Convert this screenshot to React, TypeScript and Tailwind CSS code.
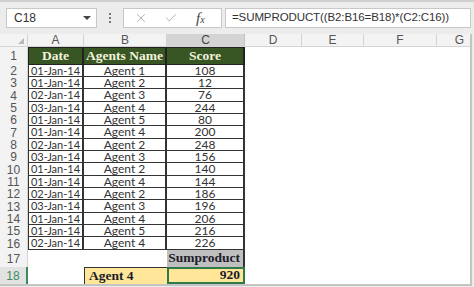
import { X, Check } from "lucide-react";

const ROWS: [string, string, number][] = [
  ["01-Jan-14", "Agent 1", 108],
  ["01-Jan-14", "Agent 2", 12],
  ["02-Jan-14", "Agent 3", 76],
  ["03-Jan-14", "Agent 4", 244],
  ["01-Jan-14", "Agent 5", 80],
  ["01-Jan-14", "Agent 4", 200],
  ["02-Jan-14", "Agent 2", 248],
  ["03-Jan-14", "Agent 3", 156],
  ["01-Jan-14", "Agent 2", 140],
  ["01-Jan-14", "Agent 4", 144],
  ["02-Jan-14", "Agent 2", 186],
  ["03-Jan-14", "Agent 3", 196],
  ["01-Jan-14", "Agent 4", 206],
  ["01-Jan-14", "Agent 5", 216],
  ["02-Jan-14", "Agent 4", 226],
];

const ui = "font-['Liberation_Sans',Arial,sans-serif]";
const cellFont = "font-['Lato','Open_Sans',sans-serif] text-[#333] whitespace-nowrap leading-[10px]";
const serif = "font-['Liberation_Serif','DejaVu_Serif',serif] font-bold text-[13.5px] whitespace-nowrap";

function RowNum({ n, active }: { n: number; active?: boolean }) {
  return (
    <div
      className={`w-[28px] shrink-0 flex items-center justify-center ${ui} text-[12px] leading-[10px] ${
        active ? "bg-[#e2e2e2] text-[#3f8a5c] border-r-2 border-[#3f8a5c]" : "bg-[#f3f3f3] text-[#555] border-r border-[#d4d4d4]"
      }`}
    >
      {n}
    </div>
  );
}

export default function App() {
  return (
    <div className="w-[474px] h-[287px] bg-[#ececec] overflow-hidden">
      {/* formula bar */}
      <div className={`h-[34px] flex items-center border-t-2 border-[#cfcfcf] ${ui}`}>
        <div className="ml-[6px] w-[91px] h-[20px] bg-white border border-[#c8c8c8] flex items-center justify-between pl-[7px] pr-[5px]">
          <span className="text-[12px] text-[#333]">C18</span>
          <span className="w-0 h-0 border-l-[4px] border-r-[4px] border-t-[4px] border-l-transparent border-r-transparent border-t-[#444]" />
        </div>
        <div className="w-[26px] flex flex-col items-center gap-[2px]">
          <span className="w-[2px] h-[2px] bg-[#777]" />
          <span className="w-[2px] h-[2px] bg-[#777]" />
          <span className="w-[2px] h-[2px] bg-[#777]" />
        </div>
        <div className="w-[99px] h-[20px] bg-white border border-[#c8c8c8] flex items-center pl-[10px] gap-[16px]">
          <X size={14} strokeWidth={1.4} className="text-[#a0a0a0]" />
          <Check size={14} strokeWidth={1.4} className="text-[#a0a0a0]" />
          <span className="ml-[2px] font-['Liberation_Serif',serif] italic text-[15px] leading-none text-[#444]">
            f<span className="text-[10px]">x</span>
          </span>
        </div>
        <div className="ml-[3px] w-[246px] h-[20px] bg-white border border-[#c8c8c8] flex items-center pl-[6px]">
          <span className="text-[11.5px] text-[#333] tracking-[-0.1px] whitespace-nowrap">=SUMPRODUCT((B2:B16=B18)*(C2:C16))</span>
        </div>
      </div>

      {/* sheet */}
      <div className="w-[472px] bg-white border-r-2 border-b-2 border-[#c4c4c4]">
        {/* column headers */}
        <div className={`h-[13px] flex bg-[#f3f3f3] border-b border-[#d4d4d4] ${ui} text-[12px] text-[#555] leading-none`}>
          <div className="w-[28px] flex items-end justify-end pr-[3px] pb-[2px] border-r border-[#d4d4d4]">
            <svg width="6" height="6" viewBox="0 0 6 6">
              <path d="M6 0V6H0Z" fill="#b8b8b8" />
            </svg>
          </div>
          <div className="w-[56px] flex items-center justify-center border-r border-[#d4d4d4]">A</div>
          <div className="w-[83px] flex items-center justify-center border-r border-[#d4d4d4]">B</div>
          <div className="w-[78px] flex items-center justify-center bg-[#d4d4d4] border-r border-[#c4c4c4] text-[#444]">C</div>
          <div className="w-[57px] flex items-center justify-center border-r border-[#d4d4d4]">D</div>
          <div className="w-[62px] flex items-center justify-center border-r border-[#d4d4d4]">E</div>
          <div className="w-[73px] flex items-center justify-center border-r border-[#d4d4d4]">F</div>
          <div className="flex-1 flex items-center justify-end pr-[6px]">G</div>
        </div>

        {/* row 1 */}
        <div className="h-[18px] flex">
          <RowNum n={1} />
          <div className={`w-[56px] flex items-center justify-center bg-[#375623] border-y border-l border-r-2 border-[#222] text-[#f2f2dc] ${serif}`}>Date</div>
          <div className={`w-[83px] flex items-center justify-center bg-[#375623] border-y border-r-2 border-[#222] text-[#f2f2dc] ${serif}`}>Agents Name</div>
          <div className={`w-[78px] flex items-center justify-center bg-[#375623] border-y border-r-2 border-[#222] text-[#f2f2dc] ${serif}`}>Score</div>
          <div className="flex-1" />
        </div>

        {ROWS.map(([d, a, s], i) => (
          <div key={i} className={`${i % 3 === 2 ? "h-[13px]" : "h-[12px]"} flex`}>
            <RowNum n={i + 2} />
            <div className={`w-[56px] flex items-center justify-center border-b border-l border-r-2 border-[#333] text-[11px] ${cellFont}`}>{d}</div>
            <div className={`w-[83px] flex items-center justify-center border-b border-r-2 border-[#333] text-[12px] ${cellFont}`}>{a}</div>
            <div className={`w-[78px] flex items-center justify-center border-b border-r-2 border-[#333] text-[12px] ${cellFont}`}>{s}</div>
            <div className="flex-1" />
          </div>
        ))}

        {/* row 17 */}
        <div className="h-[17px] flex">
          <RowNum n={17} />
          <div className="w-[139px]" />
          <div className={`w-[78px] flex items-center justify-end pr-[3px] bg-[#bfbfbf] border-r-2 border-[#333] text-[#1c1c2a] ${serif}`}>Sumproduct</div>
          <div className="flex-1" />
        </div>

        {/* row 18 */}
        <div className="h-[17px] flex">
          <RowNum n={18} active />
          <div className="w-[56px]" />
          <div className={`w-[83px] flex items-center pl-[4px] bg-[#ffe699] border-t border-l border-[#333] text-[#1c1c2a] ${serif}`}>Agent 4</div>
          <div className={`w-[78px] flex items-center justify-end pr-[3px] bg-[#ffe699] border-2 border-[#2f7a4b] text-[#1c1c2a] ${serif}`}>920</div>
          <div className="flex-1" />
        </div>
      </div>
    </div>
  );
}
